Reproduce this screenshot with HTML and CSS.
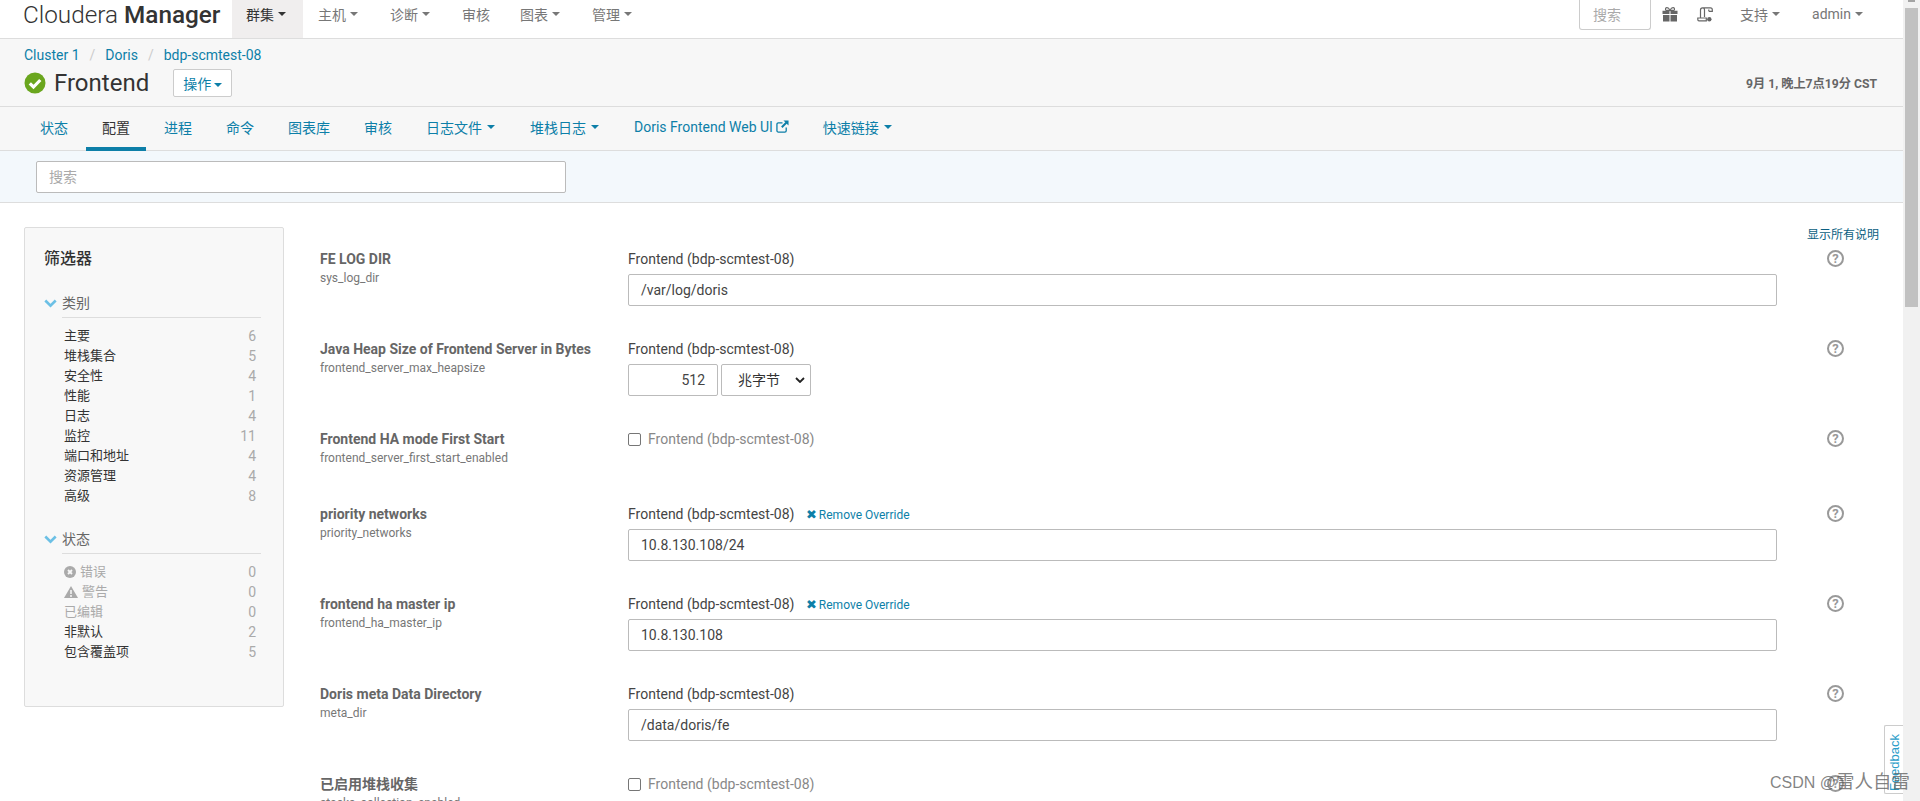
FILE: index.html
```html
<!DOCTYPE html>
<html lang="zh-CN">
<head>
  <meta charset="UTF-8">
  <title>Frontend - Cloudera Manager</title>
  <link rel="stylesheet" href="styles.css">
</head>
<body>
<div class="page">
  <div class="main">

    <!-- верхнее меню -->
    <nav class="topnav">
      <div class="logo"><span class="logo-thin">Cloudera</span> <b>Manager</b></div>
      <a class="nav-item active">群集<i class="caret"></i></a>
      <a class="nav-item">主机<i class="caret"></i></a>
      <a class="nav-item">诊断<i class="caret"></i></a>
      <a class="nav-item">审核</a>
      <a class="nav-item">图表<i class="caret"></i></a>
      <a class="nav-item">管理<i class="caret"></i></a>
      <div class="nav-right">
        <div class="nav-search">搜索</div>
        <svg class="nav-icon" viewBox="0 0 16 15" width="16" height="15">
          <path d="M4 3.4C3 2.4 3.4 .6 5 .6c1.300 0 2.300 1.200 3 2.800C8.700 1.800 9.700.6 11 .6c1.600 0 2 1.800 1 2.800z" fill="none" stroke="#666" stroke-width="1.100"/>
          <path d="M.5 3.800h7v3.200h-7zM8.500 3.800h7v3.200h-7zM1 8h6.500v6.500H1zM8.500 8H15v6.500H8.500z" fill="#666"/>
        </svg>
        <svg class="nav-icon second" viewBox="0 0 16 15" width="16" height="15">
          <path d="M3.500 11V3C3.500 1.500 4.300.8 5.500.8h8c1.300 0 1.800 1 1.800 2v1.500h-3.500M5.500.8c1.300 0 2 .8 2 2V10M11.800 4.300V2.500" fill="none" stroke="#666" stroke-width="1.200"/>
          <path d="M.8 11h8.500v2.800H2c-.8 0-1.200-.6-1.200-1.400z" fill="none" stroke="#666" stroke-width="1.200"/>
          <circle cx="12.300" cy="12.300" r="2.200" fill="#666"/>
        </svg>
        <a class="nav-item support">支持<i class="caret"></i></a>
        <a class="nav-item user">admin<i class="caret"></i></a>
      </div>
    </nav>

    <!-- заголовок сервиса -->
    <header class="page-head">
      <div class="crumbs">
        <a>Cluster 1</a><span class="sep">/</span><a>Doris</a><span class="sep">/</span><a>bdp-scmtest-08</a>
      </div>
      <div class="title-row">
        <svg class="status-ok" viewBox="0 0 22 22" width="22" height="22">
          <circle cx="11" cy="11" r="10.500" fill="#6aa61e"/>
          <path d="M5.800 11.300l3.700 3.700 6.800-7" fill="none" stroke="#fff" stroke-width="3.200"/>
        </svg>
        <h1>Frontend</h1>
        <button class="action-btn">操作<i class="caret"></i></button>
        <div class="head-time">9月 1, 晚上7点19分 CST</div>
      </div>
    </header>

    <!-- вкладки -->
    <div class="tabs">
      <a class="tab">状态</a>
      <a class="tab active">配置</a>
      <a class="tab">进程</a>
      <a class="tab">命令</a>
      <a class="tab">图表库</a>
      <a class="tab">审核</a>
      <a class="tab">日志文件<i class="caret"></i></a>
      <a class="tab">堆栈日志<i class="caret"></i></a>
      <a class="tab">Doris Frontend Web UI
        <svg class="ext" viewBox="0 0 14 14" width="13" height="13">
          <path d="M11 8v3.500A1.500 1.500 0 0 1 9.500 13h-7A1.500 1.500 0 0 1 1 11.500v-7A1.500 1.500 0 0 1 2.500 3H7" fill="none" stroke="#0d7fa8" stroke-width="1.400"/>
          <path d="M8 .5h5.500V6l-2-2L7 8.500 5.500 7 10 2.500z" fill="#0d7fa8"/>
        </svg>
      </a>
      <a class="tab">快速链接<i class="caret"></i></a>
    </div>

    <div class="search-band">
      <div class="search-box">搜索</div>
    </div>

    <div class="content">
      <!-- фильтры -->
      <aside class="filters">
        <div class="filters-title">筛选器</div>

        <div class="group-head">
          <svg viewBox="0 0 12 8" width="13" height="9"><path d="M1.200 1.200L6 6l4.800-4.800" fill="none" stroke="#6cc0e5" stroke-width="2.400"/></svg>
          <span>类别</span>
        </div>
        <ul class="group-list">
          <li><span>主要</span><em>6</em></li>
          <li><span>堆栈集合</span><em>5</em></li>
          <li><span>安全性</span><em>4</em></li>
          <li><span>性能</span><em>1</em></li>
          <li><span>日志</span><em>4</em></li>
          <li><span>监控</span><em>11</em></li>
          <li><span>端口和地址</span><em>4</em></li>
          <li><span>资源管理</span><em>4</em></li>
          <li><span>高级</span><em>8</em></li>
        </ul>

        <div class="group-head second">
          <svg viewBox="0 0 12 8" width="13" height="9"><path d="M1.200 1.200L6 6l4.800-4.800" fill="none" stroke="#6cc0e5" stroke-width="2.400"/></svg>
          <span>状态</span>
        </div>
        <ul class="group-list">
          <li class="off"><span class="with-icon">
            <svg viewBox="0 0 12 12" width="12" height="12"><circle cx="6" cy="6" r="6" fill="#aaa"/><path d="M4 4l4 4M8 4l-4 4" stroke="#f7f7f7" stroke-width="1.800"/></svg>错误</span><em>0</em></li>
          <li class="off"><span class="with-icon">
            <svg viewBox="0 0 14 12" width="14" height="12"><path d="M7 0l7 12H0z" fill="#aaa"/><path d="M7 4v4M7 9v2" stroke="#f7f7f7" stroke-width="1.500"/></svg>警告</span><em>0</em></li>
          <li class="off"><span>已编辑</span><em>0</em></li>
          <li><span>非默认</span><em>2</em></li>
          <li><span>包含覆盖项</span><em>5</em></li>
        </ul>
      </aside>

      <!-- список настроек -->
      <section class="settings">
        <a class="show-all">显示所有说明</a>

        <div class="row">
          <div class="row-key"><b>FE LOG DIR</b><small>sys_log_dir</small></div>
          <div class="row-val">
            <div class="val-label">Frontend (bdp-scmtest-08)</div>
            <div class="text-input">/var/log/doris</div>
          </div>
          <div class="row-help"><i class="help">?</i></div>
        </div>

        <div class="row">
          <div class="row-key"><b>Java Heap Size of Frontend Server in Bytes</b><small>frontend_server_max_heapsize</small></div>
          <div class="row-val">
            <div class="val-label">Frontend (bdp-scmtest-08)</div>
            <div class="heap">
              <div class="text-input num">512</div>
              <div class="text-input unit">兆字节
                <svg viewBox="0 0 10 6" width="10" height="6"><path d="M1 1l4 4 4-4" fill="none" stroke="#222" stroke-width="1.800"/></svg>
              </div>
            </div>
          </div>
          <div class="row-help"><i class="help">?</i></div>
        </div>

        <div class="row short">
          <div class="row-key"><b>Frontend HA mode First Start</b><small>frontend_server_first_start_enabled</small></div>
          <div class="row-val">
            <div class="val-label muted"><i class="check"></i>Frontend (bdp-scmtest-08)</div>
          </div>
          <div class="row-help"><i class="help">?</i></div>
        </div>

        <div class="row">
          <div class="row-key"><b>priority networks</b><small>priority_networks</small></div>
          <div class="row-val">
            <div class="val-label">Frontend (bdp-scmtest-08)
              <a class="remove"><span class="x">✖</span>Remove Override</a>
            </div>
            <div class="text-input">10.8.130.108/24</div>
          </div>
          <div class="row-help"><i class="help">?</i></div>
        </div>

        <div class="row">
          <div class="row-key"><b>frontend ha master ip</b><small>frontend_ha_master_ip</small></div>
          <div class="row-val">
            <div class="val-label">Frontend (bdp-scmtest-08)
              <a class="remove"><span class="x">✖</span>Remove Override</a>
            </div>
            <div class="text-input">10.8.130.108</div>
          </div>
          <div class="row-help"><i class="help">?</i></div>
        </div>

        <div class="row">
          <div class="row-key"><b>Doris meta Data Directory</b><small>meta_dir</small></div>
          <div class="row-val">
            <div class="val-label">Frontend (bdp-scmtest-08)</div>
            <div class="text-input">/data/doris/fe</div>
          </div>
          <div class="row-help"><i class="help">?</i></div>
        </div>

        <div class="row short">
          <div class="row-key"><b>已启用堆栈收集</b><small>stacks_collection_enabled</small></div>
          <div class="row-val">
            <div class="val-label muted"><i class="check"></i>Frontend (bdp-scmtest-08)</div>
          </div>
          <div class="row-help"><i class="help">?</i></div>
        </div>
      </section>
    </div>

    <a class="feedback"><span>Feedback</span></a>
  </div>

  <!-- полоса прокрутки -->
  <div class="scrollbar">
    <div class="scroll-arrow"></div>
    <div class="thumb"></div>
  </div>

  <div class="watermark">CSDN @<span>雷人自雷</span></div>
</div>
</body>
</html>
```

FILE: styles.css
```css
* {
  box-sizing: border-box;
}
html, body {
  margin: 0;
  height: 801px;
  overflow: hidden;
}
body {
  font-family: Roboto, "Noto Sans CJK SC", sans-serif;
  font-size: 14px;
  color: #444;
  background-color: #fff;
}
a {
  color: #0d7fa8;
  text-decoration: none;
}
.page {
  position: relative;
  display: flex;
  height: 801px;
}
.main {
  position: relative;
  flex: 1;
  min-width: 0;
  overflow: hidden;
}
.caret {
  display: inline-block;
  margin-left: 4px;
  vertical-align: middle;
  border-top: 4px solid currentColor;
  border-left: 4px solid transparent;
  border-right: 4px solid transparent;
}

/* Верхнее меню */
.topnav {
  display: flex;
  align-items: stretch;
  height: 39px;
  padding-left: 23px;
  border-bottom: 1px solid #ddd;
  background-color: #fff;
}
.logo {
  width: 209px;
  font-size: 24.300px;
  line-height: 30px;
  color: #333;
  white-space: nowrap;
}
.logo-thin {
  font-weight: 300;
}
.logo b {
  font-weight: 500;
}
.nav-item {
  display: flex;
  align-items: center;
  height: 38px;
  margin-right: 1px;
  padding: 0 15px 10px 14px;
  color: #777;
  white-space: nowrap;
}
.nav-item .caret {
  margin-left: 4px;
  margin-right: 2px;
}
.nav-item.active {
  background-color: #f0eeee;
  color: #333;
}
.nav-right {
  display: flex;
  align-items: flex-start;
  margin-left: auto;
}
.nav-search {
  width: 72px;
  height: 30px;
  padding: 4px 13px;
  border: 1px solid #ccc;
  border-top: 0;
  border-radius: 0 0 3px 3px;
  color: #aaa;
}
.nav-icon {
  margin: 7px 0 0 11px;
}
.nav-icon.second {
  margin-left: 19px;
}
.support {
  margin-left: 13px;
}
.user {
  margin-left: 0;
  padding-right: 37px;
}

/* Заголовок */
.page-head {
  height: 68px;
  padding: 6px 24px 0;
  background-color: #f7f7f7;
  border-bottom: 1px solid #ddd;
}
.crumbs {
  line-height: 20px;
}
.crumbs .sep {
  margin: 0 10px;
  color: #ccc;
}
.title-row {
  display: flex;
  align-items: center;
  height: 28px;
  margin-top: 4px;
}
.status-ok {
  flex: none;
}
.title-row h1 {
  margin: 0 0 0 8px;
  font-size: 24px;
  font-weight: 400;
  color: #333;
}
.action-btn {
  height: 28px;
  margin-left: 24px;
  padding: 0 9px;
  font: inherit;
  color: #0d7fa8;
  background-color: #fff;
  border: 1px solid #ccc;
  border-radius: 2px;
}
.action-btn .caret {
  margin-left: 3px;
}
.head-time {
  margin-left: auto;
  margin-right: 2px;
  font-size: 12.200px;
  font-weight: 700;
  color: #666;
}

/* Вкладки */
.tabs {
  display: flex;
  gap: 2px;
  height: 44px;
  padding-left: 24px;
  background-color: #f7f7f7;
  border-bottom: 1px solid #ddd;
}
.tab {
  display: flex;
  align-items: center;
  height: 44px;
  padding: 0 16px 5px;
  white-space: nowrap;
}
.tab .caret {
  margin-left: 5px;
  margin-right: 1px;
}
.tab.active {
  color: #333;
  border-bottom: 4px solid #0d7fa8;
  padding-bottom: 1px;
}
.tab .ext {
  margin-left: 3px;
}

.search-band {
  height: 52px;
  padding: 10px 36px;
  background-color: #f3f8fc;
  border-bottom: 1px solid #ddd;
}
.search-box {
  width: 530px;
  height: 32px;
  padding: 4px 12px;
  color: #aaa;
  background-color: #fff;
  border: 1px solid #bbb;
  border-radius: 2px;
}

/* Основная часть */
.content {
  display: flex;
  padding: 24px 0 0 24px;
}
.filters {
  flex: none;
  width: 260px;
  height: 480px;
  padding: 21px 20px 0 19px;
  background-color: #f8f8f8;
  border: 1px solid #ddd;
  border-radius: 2px;
}
.filters-title {
  font-size: 16px;
  font-weight: 500;
  line-height: 20px;
  color: #333;
}
.group-head {
  display: flex;
  align-items: center;
  gap: 5px;
  width: 217px;
  margin-top: 24px;
  color: #666;
  line-height: 20px;
}
.group-head.second {
  margin-top: 23px;
}
.group-head span {
  flex: 1;
  height: 25px;
  margin-bottom: -5px;
  border-bottom: 1px solid #ddd;
}
.group-list {
  list-style: none;
  margin: 13px 0 0;
  padding: 0 0 0 20px;
}
.group-list li {
  display: flex;
  justify-content: space-between;
  width: 192px;
  height: 20px;
  font-size: 13px;
  line-height: 20px;
  color: #333;
}
.group-list em {
  font-size: 14px;
  font-style: normal;
  color: #aaa;
}
.group-list .off span {
  color: #aaa;
}
.with-icon {
  display: flex;
  align-items: center;
  gap: 4px;
}

.settings {
  position: relative;
  flex: 1;
  padding: 22px 0 0 36px;
}
.show-all {
  position: absolute;
  top: 0;
  right: 24px;
  font-size: 12px;
  line-height: 16px;
  color: #0b5f82;
}
.row {
  display: flex;
  height: 90px;
}
.row.short {
  height: 75px;
}
.row-key {
  flex: none;
  width: 308px;
}
.row-key b {
  display: block;
  font-weight: 700;
  font-size: 14px;
  line-height: 20px;
  color: #666;
}
.row-key small {
  display: block;
  font-size: 12px;
  line-height: 18px;
  color: #777;
}
.row-val {
  flex: none;
  width: 1149px;
}
.val-label {
  height: 20px;
  line-height: 20px;
  margin-bottom: 5px;
  color: #444;
}
.val-label.muted {
  display: flex;
  align-items: center;
  color: #888;
}
.check {
  flex: none;
  width: 13px;
  height: 13px;
  margin-right: 7px;
  background-color: #fff;
  border: 1px solid #767676;
  border-radius: 2px;
}
.text-input {
  height: 32px;
  padding: 5px 12px;
  line-height: 20px;
  color: #444;
  background-color: #fff;
  border: 1px solid #bbb;
  border-radius: 2px;
}
.heap {
  display: flex;
  gap: 3px;
}
.num {
  width: 90px;
  text-align: right;
  padding-right: 12px;
}
.unit {
  display: flex;
  align-items: center;
  justify-content: space-between;
  width: 90px;
  padding: 5px 5px 5px 16px;
  color: #333;
}
.remove {
  margin-left: 8px;
  font-size: 12px;
}
.remove .x {
  font-size: 12.500px;
  margin-right: 2px;
}
.row-help {
  flex: none;
  width: 116px;
  padding-left: 50px;
}
.help {
  display: block;
  width: 17px;
  height: 17px;
  margin-top: 1px;
  font-style: normal;
  font-size: 13px;
  font-weight: 700;
  line-height: 14px;
  text-align: center;
  color: #999;
  border: 2px solid #999;
  border-radius: 50%;
}

.feedback {
  position: absolute;
  right: 0;
  top: 725px;
  width: 19px;
  height: 69px;
  background-color: #fff;
  border: 1px solid #ccc;
  border-right: 0;
  border-radius: 2px 0 0 2px;
}
.feedback span {
  position: absolute;
  top: 8px;
  left: 2px;
  writing-mode: vertical-rl;
  transform: rotate(180deg);
  font-family: "Liberation Sans", sans-serif;
  font-size: 13px;
  line-height: 15px;
  color: #2a9dc9;
}
.watermark {
  position: absolute;
  left: 1770px;
  top: 770px;
  font-family: "Liberation Sans", "Noto Sans CJK SC", sans-serif;
  font-size: 16px;
  line-height: 24px;
  white-space: nowrap;
  color: rgba(90, 90, 90, 0.75);
}
.watermark span {
  font-size: 18.500px;
}

/* Полоса прокрутки */
.scrollbar {
  flex: none;
  width: 17px;
  background-color: #f1f1f1;
}
.scroll-arrow {
  width: 7px;
  height: 2px;
  margin: 0 auto 6px;
  background-color: #a3a3a3;
}
.thumb {
  width: 13px;
  height: 299px;
  margin-left: 2px;
  background-color: #c1c1c1;
}
```
